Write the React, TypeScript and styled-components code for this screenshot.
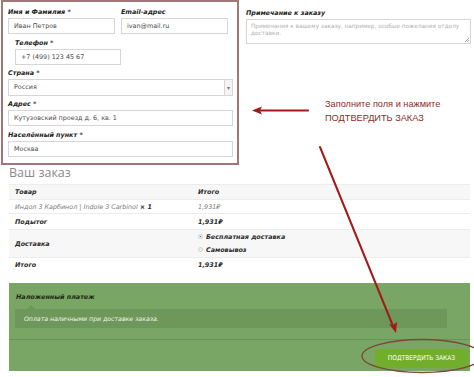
import React from 'react';
import styled, { createGlobalStyle } from 'styled-components';

const GlobalStyle = createGlobalStyle`
  html, body {
    margin: 0;
    padding: 0;
    background: #ffffff;
  }
  body {
    font-family: 'DejaVu Sans', Verdana, sans-serif;
  }
`;

const Page = styled.div`
  position: relative;
  width: 474px;
  height: 377px;
  overflow: hidden;
  background: #ffffff;
`;

const Top = styled.div`
  display: grid;
  grid-template-columns: 238px 225px;
  column-gap: 7px;
  height: 165px;
  padding-left: 1px;
`;

const FormBox = styled.div`
  box-sizing: border-box;
  height: 165px;
  border: 2px solid #a27676;
  padding: 5px 4px 0 5px;
`;

const Row = styled.div`
  display: flex;
  gap: 6px;
`;

const Field = styled.div<{ w?: number; indent?: number; top?: number }>`
  width: ${({ w }) => (w ? `${w}px` : 'auto')};
  margin-left: ${({ indent }) => indent || 0}px;
  margin-top: ${({ top }) => top || 0}px;
`;

const Label = styled.div`
  font-size: 6.4px;
  line-height: 10px;
  height: 10px;
  font-weight: bold;
  font-style: italic;
  color: #222222;
  margin-bottom: 1px;
  white-space: nowrap;
`;

const Req = styled.span`
  color: #555555;
`;

const Input = styled.div<{ h?: number }>`
  box-sizing: border-box;
  height: ${({ h }) => h || 16}px;
  line-height: ${({ h }) => (h || 16) - 2}px;
  border: 1px solid #d6d6d6;
  background: #ffffff;
  padding-left: 5px;
  font-size: 6.4px;
  color: #4a4a4a;
  white-space: nowrap;
`;

const Select = styled(Input)`
  display: flex;
  justify-content: space-between;
  padding-right: 0;
`;

const SelectArrow = styled.span`
  width: 7px;
  border-left: 1px solid #d6d6d6;
  background: #f4f4f4;
  text-align: center;
  color: #777;
  font-size: 6px;
`;

const Side = styled.div`
  padding-top: 8px;
`;

const NoteArea = styled.div`
  position: relative;
  box-sizing: border-box;
  height: 25px;
  border: 1px solid #d6d6d6;
  padding: 3px 3px 3px 4px;
  font-size: 5.75px;
  line-height: 7px;
  color: #b0b0b0;
`;

const Grip = styled.span`
  position: absolute;
  right: 1px;
  bottom: 1px;
  width: 4px;
  height: 4px;
  background: linear-gradient(135deg, transparent 50%, #aaa 50%, #aaa 60%, transparent 60%, transparent 75%, #aaa 75%, #aaa 85%, transparent 85%);
`;

const Callout = styled.div`
  margin: 53px 0 0 79px;
  font-family: 'Liberation Sans', Arial, sans-serif;
  font-size: 9.2px;
  line-height: 14px;
  color: #8e2a2a;
  white-space: nowrap;
`;

const Heading = styled.div`
  padding-left: 9px;
  font-family: 'Open Sans', 'Liberation Sans', sans-serif;
  font-size: 12.5px;
  line-height: 16px;
  color: #8a8a8a;
`;

const Table = styled.div`
  display: grid;
  grid-template-columns: 183px 1fr;
  width: 461px;
  margin: 3px 0 0 9px;
`;

const Cell = styled.div<{ h: number; shade?: boolean; bold?: boolean; muted?: boolean; align?: string }>`
  box-sizing: border-box;
  height: ${({ h }) => h}px;
  display: flex;
  flex-direction: column;
  justify-content: ${({ align }) => align || 'center'};
  padding: 0 6px;
  background: ${({ shade }) => (shade ? '#f7f7f7' : '#ffffff')};
  border-top: 1px solid #ececec;
  font-size: 6.4px;
  font-style: italic;
  font-weight: ${({ bold }) => (bold ? 'bold' : 'normal')};
  color: ${({ muted }) => (muted ? '#7a7a7a' : '#2b2b2b')};
  white-space: nowrap;
`;

const Qty = styled.strong`
  color: #2b2b2b;
`;

const Option = styled.div`
  display: flex;
  align-items: center;
  gap: 3px;
  height: 13px;
  font-weight: bold;
  color: #2b2b2b;
`;

const Radio = styled.span<{ checked?: boolean }>`
  box-sizing: border-box;
  width: 5px;
  height: 5px;
  border-radius: 50%;
  border: 1px solid #cfcfcf;
  background: ${({ checked }) => (checked ? 'radial-gradient(circle, #777 40%, #eee 45%)' : '#f2f2f2')};
`;

const Payment = styled.div`
  box-sizing: border-box;
  width: 461px;
  height: 88px;
  margin: 11px 0 0 9px;
  background: #79a565;
  padding-top: 9px;
`;

const MethodTitle = styled.div`
  padding-left: 7px;
  font-size: 6.4px;
  line-height: 10px;
  font-weight: bold;
  font-style: italic;
  color: #1d2a14;
`;

const MethodBox = styled.div`
  position: relative;
  width: 432px;
  height: 19px;
  margin: 7px 0 0 6px;
  padding-left: 9px;
  box-sizing: border-box;
  background: #6e985b;
  font-size: 6.2px;
  line-height: 19px;
  font-style: italic;
  color: #eef4e8;

  &::before {
    content: '';
    position: absolute;
    left: 12px;
    top: -4px;
    border: 4px solid transparent;
    border-top: 0;
    border-bottom-color: #6e985b;
  }
`;

const Divider = styled.div`
  height: 1px;
  margin-top: 11px;
  background: #6a9356;
`;

const Actions = styled.div`
  display: flex;
  justify-content: flex-end;
  padding: 9px 2px 0 0;
`;

const Button = styled.div`
  width: 93px;
  height: 19px;
  border-radius: 3px;
  background: #72ae2c;
  color: #ffffff;
  font-family: 'DejaVu Sans Condensed', 'DejaVu Sans', sans-serif;
  font-stretch: condensed;
  font-size: 6.6px;
  line-height: 19px;
  text-align: center;
  white-space: nowrap;
`;

const Overlay = styled.svg`
  position: absolute;
  left: 0;
  top: 0;
  pointer-events: none;
`;

const App = () => {
  return (
    <>
      <GlobalStyle />
      <Page>
        <Top>
          <FormBox>
            <Row>
              <Field w={107}>
                <Label>
                  Имя и Фамилия <Req>*</Req>
                </Label>
                <Input>Иван Петров</Input>
              </Field>
              <Field w={107}>
                <Label>Email-адрес</Label>
                <Input>ivan@mail.ru</Input>
              </Field>
            </Row>
            <Field w={106} indent={7} top={4}>
              <Label>
                Телефон <Req>*</Req>
              </Label>
              <Input>+7 (499) 123 45 67</Input>
            </Field>
            <Field top={3}>
              <Label>
                Страна <Req>*</Req>
              </Label>
              <Select h={17}>
                <span>Россия</span>
                <SelectArrow>▾</SelectArrow>
              </Select>
            </Field>
            <Field top={3}>
              <Label>
                Адрес <Req>*</Req>
              </Label>
              <Input>Кутузовский проезд д. 6, кв. 1</Input>
            </Field>
            <Field top={4}>
              <Label>
                Населённый пункт <Req>*</Req>
              </Label>
              <Input>Москва</Input>
            </Field>
          </FormBox>
          <Side>
            <Label>Примечание к заказу</Label>
            <NoteArea>
              Примечания к вашему заказу, например, особые пожелания отделу доставки.
              <Grip />
            </NoteArea>
            <Callout>
              Заполните поля и нажмите
              <br />
              ПОДТВЕРДИТЬ ЗАКАЗ
            </Callout>
          </Side>
        </Top>

        <Heading>Ваш заказ</Heading>

        <Table>
          <Cell h={15} shade bold>Товар</Cell>
          <Cell h={15} shade bold>Итого</Cell>
          <Cell h={14} muted>
            <span>
              Индол 3 Карбинол | Indole 3 Carbinol <Qty>× 1</Qty>
            </span>
          </Cell>
          <Cell h={14} muted>1,931₽</Cell>
          <Cell h={16} bold>Подытог</Cell>
          <Cell h={16} bold>1,931₽</Cell>
          <Cell h={28} shade bold>Доставка</Cell>
          <Cell h={28} shade align="flex-start">
            <Option>
              <Radio checked />
              Бесплатная доставка
            </Option>
            <Option>
              <Radio />
              Самовывоз
            </Option>
          </Cell>
          <Cell h={15} bold>Итого</Cell>
          <Cell h={15} bold>1,931₽</Cell>
        </Table>

        <Payment>
          <MethodTitle>Наложенный платеж</MethodTitle>
          <MethodBox>Оплата наличными при доставке заказа.</MethodBox>
          <Divider />
          <Actions>
            <Button>ПОДТВЕРДИТЬ ЗАКАЗ</Button>
          </Actions>
        </Payment>

        <Overlay width="474" height="377" viewBox="0 0 474 377">
          <g stroke="#a11b1b" fill="#a11b1b" strokeLinecap="round">
            <line x1="308" y1="110.5" x2="259" y2="110.5" strokeWidth="2.2" />
            <polygon points="252,110.5 262,106.5 260,110.5 262,114.5" stroke="none" />
            <line x1="320" y1="147" x2="393" y2="326" strokeWidth="2" />
            <polygon points="396,333 389,324 393,325 397,322" stroke="none" />
          </g>
          <ellipse cx="422" cy="356" rx="60" ry="16.5" fill="none" stroke="#7b4a33" strokeWidth="1.3" />
        </Overlay>
      </Page>
    </>
  );
};

export default App;
